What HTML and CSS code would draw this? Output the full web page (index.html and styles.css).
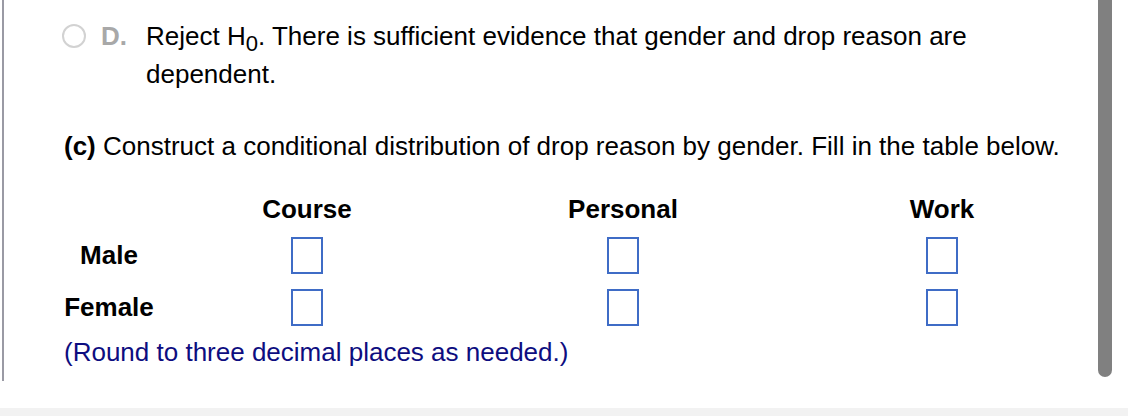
FILE: index.html
```html
<!DOCTYPE html>
<html>
<head>
<meta charset="utf-8">
<link rel="stylesheet" href="styles.css">
</head>
<body>
<div class="page">
  <div class="main">
    <div class="panel">
      <div class="option">
        <span class="radio"></span>
        <span class="letter">D.</span>
        <div class="option-text">Reject H<sub>0</sub>. There is sufficient evidence that gender and drop reason are dependent.</div>
      </div>
      <p class="question"><b>(c)</b> Construct a conditional distribution of drop reason by gender. Fill in the table below.</p>
      <div class="table">
        <div class="cell"></div>
        <div class="cell head">Course</div>
        <div class="cell head">Personal</div>
        <div class="cell head">Work</div>
        <div class="cell label">Male</div>
        <div class="cell"><span class="box"></span></div>
        <div class="cell"><span class="box"></span></div>
        <div class="cell"><span class="box"></span></div>
        <div class="cell label">Female</div>
        <div class="cell"><span class="box"></span></div>
        <div class="cell"><span class="box"></span></div>
        <div class="cell"><span class="box"></span></div>
      </div>
      <p class="note">(Round to three decimal places as needed.)</p>
    </div>
    <div class="scroll"><div class="thumb"></div></div>
  </div>
  <div class="strip"></div>
</div>
</body>
</html>
```

FILE: styles.css
```css
html, body {
  margin: 0;
  padding: 0;
  background: #fff;
}
body {
  font-family: "Liberation Sans", Arial, sans-serif;
  color: #000;
  width: 1128px;
  height: 416px;
  overflow: hidden;
}
.page {
  display: flex;
  flex-direction: column;
  height: 416px;
}
.main {
  display: flex;
  height: 408px;
}
.panel {
  flex: 1;
  margin-left: 2px;
  height: 381px;
  border-left: 2px solid #9a9aa4;
  padding-left: 60px;
  box-sizing: border-box;
  font-size: 26px;
}
.option {
  display: flex;
  align-items: flex-start;
  padding-top: 17px;
  line-height: 38px;
}
.radio {
  width: 24px;
  height: 24px;
  border: 2px solid #d2d2d2;
  border-radius: 50%;
  box-sizing: border-box;
  margin-top: 7px;
  margin-left: -2px;
  flex: none;
}
.letter {
  color: #a8a8a8;
  font-weight: bold;
  margin-left: 15px;
  width: 45px;
  flex: none;
}
.option-text {
  width: 860px;
}
.option-text sub {
  font-size: 0.85em;
  vertical-align: -6px;
  line-height: 0;
}
.question {
  margin: 38px 0 0 0;
  line-height: 30px;
}
.table {
  display: grid;
  grid-template-columns: 90px 306px 326px 312px;
  grid-template-rows: 36px 52px 52px;
  margin-top: 32px;
}
.cell {
  display: flex;
  align-items: center;
  justify-content: center;
}
.head {
  font-weight: bold;
  align-self: start;
  line-height: 32px;
}
.label {
  font-weight: bold;
}
.box {
  width: 32px;
  height: 37px;
  border: 2px solid #3f6cc6;
  box-sizing: border-box;
  background: #fff;
}
.note {
  margin: 4px 0 0 0;
  color: #0d0d80;
  line-height: 30px;
}
.scroll {
  width: 14px;
  margin-right: 24px;
}
.thumb {
  width: 14px;
  height: 377px;
  background: #808080;
  border-radius: 0 0 7px 7px;
}
.strip {
  height: 8px;
  background: #f2f2f2;
}
```
